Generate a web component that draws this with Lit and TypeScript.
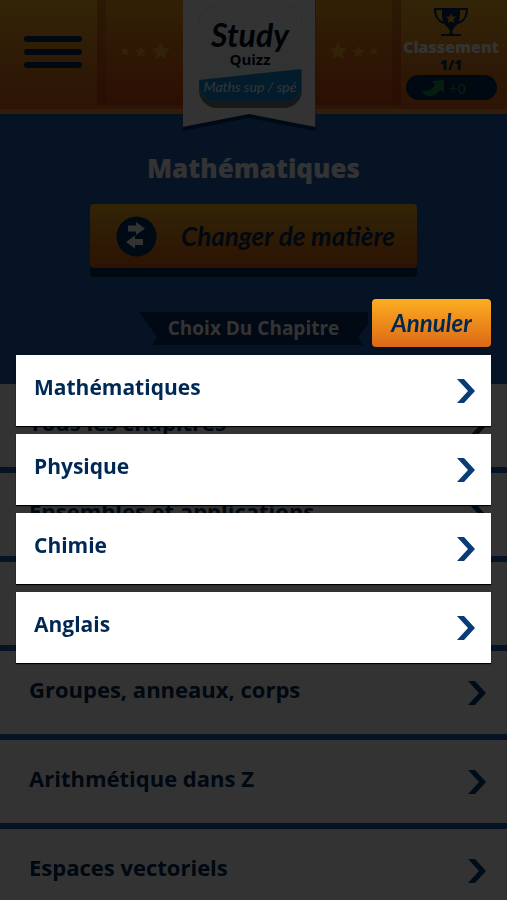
import { LitElement, html, svg, css } from "lit";
import { customElement, property, state } from "lit/decorators.js";

const STAR = "M12 1l3.1 7.4 8 .6-6.1 5.2 1.9 7.8L12 17.8 5.1 22 7 14.2.9 9l8-.6z";

const chevron = html`<svg class="chevron" viewBox="0 0 18 24" aria-hidden="true">
  <path d="M0 0h7l11 12L7 24H0l11-12z" fill="currentColor" />
</svg>`;

const star = (size: string) => html`<svg class="star ${size}" viewBox="0 0 24 24" aria-hidden="true">
  ${svg`<path d=${STAR} />`}
</svg>`;

const shared = css`
  * {
    box-sizing: border-box;
  }
  button {
    border: 0;
    margin: 0;
    padding: 0;
    background: none;
    font-family: inherit;
    color: inherit;
    cursor: pointer;
  }
  svg {
    display: block;
    flex: none;
  }
`;

@customElement("quizz-header")
export class QuizzHeader extends LitElement {
  static styles = [
    shared,
    css`
      :host {
        display: grid;
        grid-template-columns: 97px 1fr 106px;
        height: 114px;
        border-bottom: 5px solid #f09628;
        background: linear-gradient(#fbb424, #f0961e 35%, #e1781e 70%, #e66420);
      }
      .menu {
        display: flex;
        flex-direction: column;
        justify-content: center;
        gap: 7px;
        padding: 0 15px 5px 24px;
      }
      .bar {
        height: 6px;
        border-radius: 3px;
        background: #002855;
      }
      .centre {
        display: flex;
        justify-content: center;
        align-items: flex-start;
        gap: 12px;
        height: 105px;
        border: solid rgba(170, 50, 10, 0.3);
        border-width: 0 9px;
        background: linear-gradient(#f0a01e, #e67819 45%, #dc4b14);
      }
      .stars {
        display: flex;
        align-items: center;
        gap: 4px;
        padding-top: 41px;
      }
      .star {
        fill: #f5aa28;
      }
      .small {
        width: 10px;
      }
      .medium {
        width: 13px;
      }
      .large {
        width: 20px;
      }
      .pennant {
        position: relative;
        z-index: 1;
        flex: none;
        width: 133px;
        height: 131px;
        padding: 5px 14px 0 16px;
        background: #002d6e;
        clip-path: polygon(0 0, 100% 0, 100% 131px, 50% 118px, 0 131px);
      }
      .pennant::before {
        content: "";
        position: absolute;
        inset: 0;
        background: #fff;
        clip-path: polygon(0 0, 100% 0, 100% 127px, 50% 114px, 0 127px);
      }
      .logo {
        position: relative;
        height: 103px;
        padding-bottom: 6px;
        border-radius: 18px;
        background: #787878;
      }
      .face {
        display: flex;
        flex-direction: column;
        align-items: center;
        height: 97px;
        overflow: hidden;
        border-radius: 18px;
        background: linear-gradient(#fff, #f0f5f5);
        color: #000a19;
      }
      .study {
        padding-top: 16px;
        font: italic 700 32px/28px Lato, sans-serif;
      }
      .quizz {
        font: 700 15px/20px "Open Sans", sans-serif;
      }
      .subject {
        align-self: stretch;
        flex: 1;
        padding-top: 9px;
        text-align: center;
        background: #0a8cdc;
        clip-path: polygon(0 11px, 100% 0, 100% 100%, 0 100%);
        color: #fff;
        font: italic 400 14px/18px Lato, sans-serif;
        white-space: nowrap;
      }
      .rank {
        display: flex;
        flex-direction: column;
        align-items: center;
        padding: 8px 6px 0 0;
        font-weight: 800;
      }
      .trophy {
        width: 34px;
        height: 28px;
      }
      .label {
        padding-top: 2px;
        color: #fff;
        font-size: 16px;
        line-height: 18px;
      }
      .place {
        color: #002855;
        font-size: 14px;
        line-height: 18px;
      }
      .delta {
        display: flex;
        align-items: center;
        justify-content: center;
        gap: 5px;
        width: 91px;
        height: 25px;
        margin-top: 1px;
        padding-right: 14px;
        border-radius: 13px;
        background: #00285a;
        color: #1e8c46;
        font-size: 15px;
        font-weight: 600;
        line-height: 20px;
      }
      .arrow {
        width: 22px;
        height: 16px;
      }
    `,
  ];

  render() {
    return html`
      <button class="menu" aria-label="Menu">
        <span class="bar"></span><span class="bar"></span><span class="bar"></span>
      </button>
      <div class="centre">
        <div class="stars">${star("small")}${star("medium")}${star("large")}</div>
        <div class="pennant">
          <div class="logo">
            <div class="face">
              <span class="study">Study</span>
              <span class="quizz">Quizz</span>
              <span class="subject">Maths sup / spé</span>
            </div>
          </div>
        </div>
        <div class="stars">${star("large")}${star("medium")}${star("small")}</div>
      </div>
      <div class="rank">
        <svg class="trophy" viewBox="0 0 34 28" aria-hidden="true">
          <path d="M8 1H1c0 8 4 13 10 14M26 1h7c0 8-4 13-10 14" fill="none" stroke="#002855" stroke-width="2" />
          <path d="M8 0h18v6c0 8-3 11-6 14-2 2-2 4-1 6h8v2H7v-2h8c1-2 1-4-1-6-3-3-6-6-6-14z" fill="#002855" />
          <path d="M17 5l1.5 3.4 3.7.3-2.8 2.5.9 3.7-3.3-2-3.3 2 .9-3.7-2.8-2.5 3.7-.3z" fill="#f0a01e" />
        </svg>
        <span class="label">Classement</span>
        <span class="place">1/1</span>
        <span class="delta">
          <svg class="arrow" viewBox="0 0 22 16" aria-hidden="true">
            <path d="M10 1L22 0v13l-4-3c-3 5-8 7-13 6-3-1-4-3-5-6 5 2 10 0 13-5z" fill="#1e8c46" />
          </svg>
          +0
        </span>
      </div>
    `;
  }
}

@customElement("chapter-list")
export class ChapterList extends LitElement {
  @property({ type: Array }) chapters: string[] = [];

  static styles = [
    shared,
    css`
      :host {
        display: block;
      }
      .row {
        display: flex;
        align-items: center;
        justify-content: space-between;
        width: 100%;
        height: 89px;
        padding: 0 21px 0 29px;
        border-bottom: 6px solid #1c5fb4;
        background: #fff;
        color: #002855;
        text-align: left;
      }
      .name {
        padding-bottom: 8px;
        font-size: 22px;
        font-weight: 700;
        line-height: 28px;
      }
      .chevron {
        width: 18px;
        height: 24px;
        color: #003c78;
      }
    `,
  ];

  render() {
    return this.chapters.map(
      (c) => html`<button class="row"><span class="name">${c}</span>${chevron}</button>`
    );
  }
}

@customElement("subject-picker")
export class SubjectPicker extends LitElement {
  @property({ type: Array }) subjects: string[] = [];

  static styles = [
    shared,
    css`
      :host {
        position: fixed;
        inset: 0;
        z-index: 2;
        display: flex;
        flex-direction: column;
        gap: 8px;
        padding: 299px 16px 0;
        background: rgba(0, 0, 0, 0.8);
      }
      .cancel {
        align-self: flex-end;
        width: 119px;
        height: 48px;
        border-radius: 4px;
        background: linear-gradient(#fcae20, #dc6818);
        color: #002855;
        font: italic 700 24px/28px Lato, sans-serif;
      }
      .item {
        display: flex;
        align-items: center;
        justify-content: space-between;
        height: 71px;
        padding: 0 16px 0 18px;
        background: #fff;
        box-shadow: 0 1px 1px #000;
        color: #002855;
        text-align: left;
      }
      .name {
        padding-bottom: 7px;
        font-size: 21px;
        font-weight: 700;
        line-height: 28px;
      }
      .chevron {
        width: 18px;
        height: 24px;
        color: #083c78;
      }
    `,
  ];

  private cancel() {
    this.dispatchEvent(new CustomEvent("cancel"));
  }

  render() {
    return html`
      <button class="cancel" @click=${this.cancel}>Annuler</button>
      ${this.subjects.map(
        (s) => html`<button class="item"><span class="name">${s}</span>${chevron}</button>`
      )}
    `;
  }
}

@customElement("app-root")
export class AppRoot extends LitElement {
  @state() private picking = true;

  private chapters = [
    "Tous les chapitres",
    "Ensembles et applications",
    "Nombres réels et complexes",
    "Groupes, anneaux, corps",
    "Arithmétique dans Z",
    "Espaces vectoriels",
  ];

  private subjects = ["Mathématiques", "Physique", "Chimie", "Anglais"];

  static styles = [
    shared,
    css`
      :host {
        display: block;
        height: 100vh;
        overflow: hidden;
        background: #1c5fb4;
        font-family: "Open Sans", "Noto Sans", sans-serif;
      }
      .hero {
        display: flex;
        flex-direction: column;
        align-items: center;
        padding: 38px 16px 39px;
      }
      .title {
        margin: 0 0 20px;
        color: #fff;
        font-size: 26px;
        font-weight: 800;
        line-height: 32px;
      }
      .change {
        display: flex;
        align-items: center;
        gap: 24px;
        width: 327px;
        height: 64px;
        padding: 0 24px 0 26px;
        border-radius: 4px;
        background: linear-gradient(#fbb424, #f09a1e 30%, #dc5f14);
        box-shadow: 0 9px 0 #002855;
        color: #002855;
        font: italic 700 26px/36px Lato, sans-serif;
        white-space: nowrap;
      }
      .swap {
        width: 41px;
        height: 41px;
      }
      .ribbon {
        width: 229px;
        height: 33px;
        margin: 44px 0 0;
        background: #002d64;
        clip-path: polygon(0 0, 100% 0, 100% 12px, 219px 25px, 224px 100%, 13px 100%, 18px 25px);
        color: #fff;
        font-size: 19px;
        font-weight: 700;
        line-height: 32px;
        text-align: center;
      }
    `,
  ];

  render() {
    return html`
      <quizz-header></quizz-header>
      <section class="hero">
        <h1 class="title">Mathématiques</h1>
        <button class="change" @click=${() => (this.picking = true)}>
          <svg class="swap" viewBox="0 0 41 41" aria-hidden="true">
            <circle cx="20.5" cy="20.5" r="20" fill="#003264" />
            <path d="M12 9.5h8V6l9 6.5-9 6.5v-3.5h-8zM27 23h-8v-3.5l-9 6.5 9 6.5V29h8z" fill="#fff" />
          </svg>
          <span>Changer de matière</span>
        </button>
        <h2 class="ribbon">Choix Du Chapitre</h2>
      </section>
      <chapter-list .chapters=${this.chapters}></chapter-list>
      ${this.picking
        ? html`<subject-picker
            .subjects=${this.subjects}
            @cancel=${() => (this.picking = false)}
          ></subject-picker>`
        : ""}
    `;
  }
}
